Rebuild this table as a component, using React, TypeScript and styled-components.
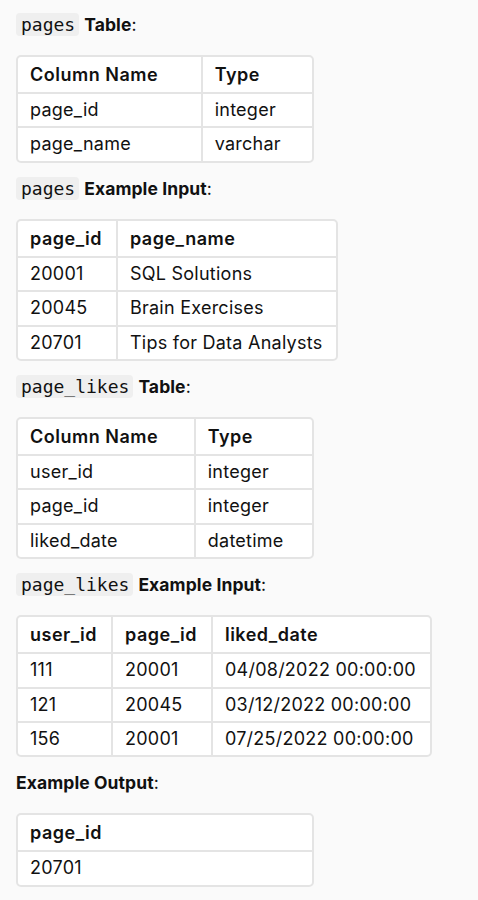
import React from 'react'
import styled, { createGlobalStyle } from 'styled-components';

const GlobalStyle = createGlobalStyle`
    body {
        margin: 0;
        background-color: #fafafa;
        font-family: Inter, "Noto Sans", sans-serif;
        color: #111;
    }
`

const Page = styled.div`
    padding: 13px 16px 16px 16px;
    display: flex;
    flex-direction: column;
    align-items: flex-start;
`

const Heading = styled.div`
    display: flex;
    align-items: center;
    height: 23px;
    font-size: 17.5px;
    margin-bottom: 19px;
`

const Code = styled.code`
    font-family: "DejaVu Sans Mono", monospace;
    font-size: 18px;
    line-height: 23px;
    background-color: #efefef;
    border-radius: 4px;
    padding: 0 4px 0 5px;
    margin-right: 5px;
`

const Bold = styled.strong`
    font-weight: 700;
    letter-spacing: 0.1px;
`

const TableBox = styled.div`
    border: 2px solid #e4e4e4;
    border-radius: 5px;
    overflow: hidden;
    background-color: #fff;
    margin-bottom: 14px;
`

const Table = styled.table`
    border-collapse: collapse;
    min-width: 294px;
    font-size: 18px;
    letter-spacing: 0.25px;
`

const Cell = styled.td<{ $head?: boolean }>`
    text-align: left;
    padding: ${p => p.$head ? '6px 14px 5px 12px' : '4px 14px 4px 12px'};
    line-height: ${p => p.$head ? '24px' : '24.4px'};
    font-weight: ${p => p.$head ? 600 : 400};
    letter-spacing: ${p => p.$head ? '0.5px' : '0.25px'};
    border-right: 2px solid #e4e4e4;
    border-bottom: 2px solid #e4e4e4;
    white-space: nowrap;
    &:last-child {
        border-right: none;
    }
    tr:last-child > & {
        border-bottom: none;
    }
`

type Section = {
    code?: string,
    title: string,
    head: string[],
    rows: string[][]
};

const sections: Section[] = [
    { code: 'pages', title: 'Table', head: ['Column Name', 'Type'], rows: [['page_id', 'integer'], ['page_name', 'varchar']] },
    { code: 'pages', title: 'Example Input', head: ['page_id', 'page_name'], rows: [['20001', 'SQL Solutions'], ['20045', 'Brain Exercises'], ['20701', 'Tips for Data Analysts']] },
    { code: 'page_likes', title: 'Table', head: ['Column Name', 'Type'], rows: [['user_id', 'integer'], ['page_id', 'integer'], ['liked_date', 'datetime']] },
    { code: 'page_likes', title: 'Example Input', head: ['user_id', 'page_id', 'liked_date'], rows: [['111', '20001', '04/08/2022 00:00:00'], ['121', '20045', '03/12/2022 00:00:00'], ['156', '20001', '07/25/2022 00:00:00']] },
    { title: 'Example Output', head: ['page_id'], rows: [['20701']] },
];

export default function App() {
    return (
        <Page>
            <GlobalStyle />
            {sections.map((s, i) => (
                <React.Fragment key={i}>
                    <Heading>
                        {s.code && <Code>{s.code}</Code>}
                        <Bold>{s.title}</Bold>:
                    </Heading>
                    <TableBox>
                        <Table>
                            <tbody>
                                <tr>
                                    {s.head.map(h => <Cell as="th" $head key={h}>{h}</Cell>)}
                                </tr>
                                {s.rows.map((r, j) => (
                                    <tr key={j}>
                                        {r.map((c, k) => <Cell key={k}>{c}</Cell>)}
                                    </tr>
                                ))}
                            </tbody>
                        </Table>
                    </TableBox>
                </React.Fragment>
            ))}
        </Page>
    );
}
